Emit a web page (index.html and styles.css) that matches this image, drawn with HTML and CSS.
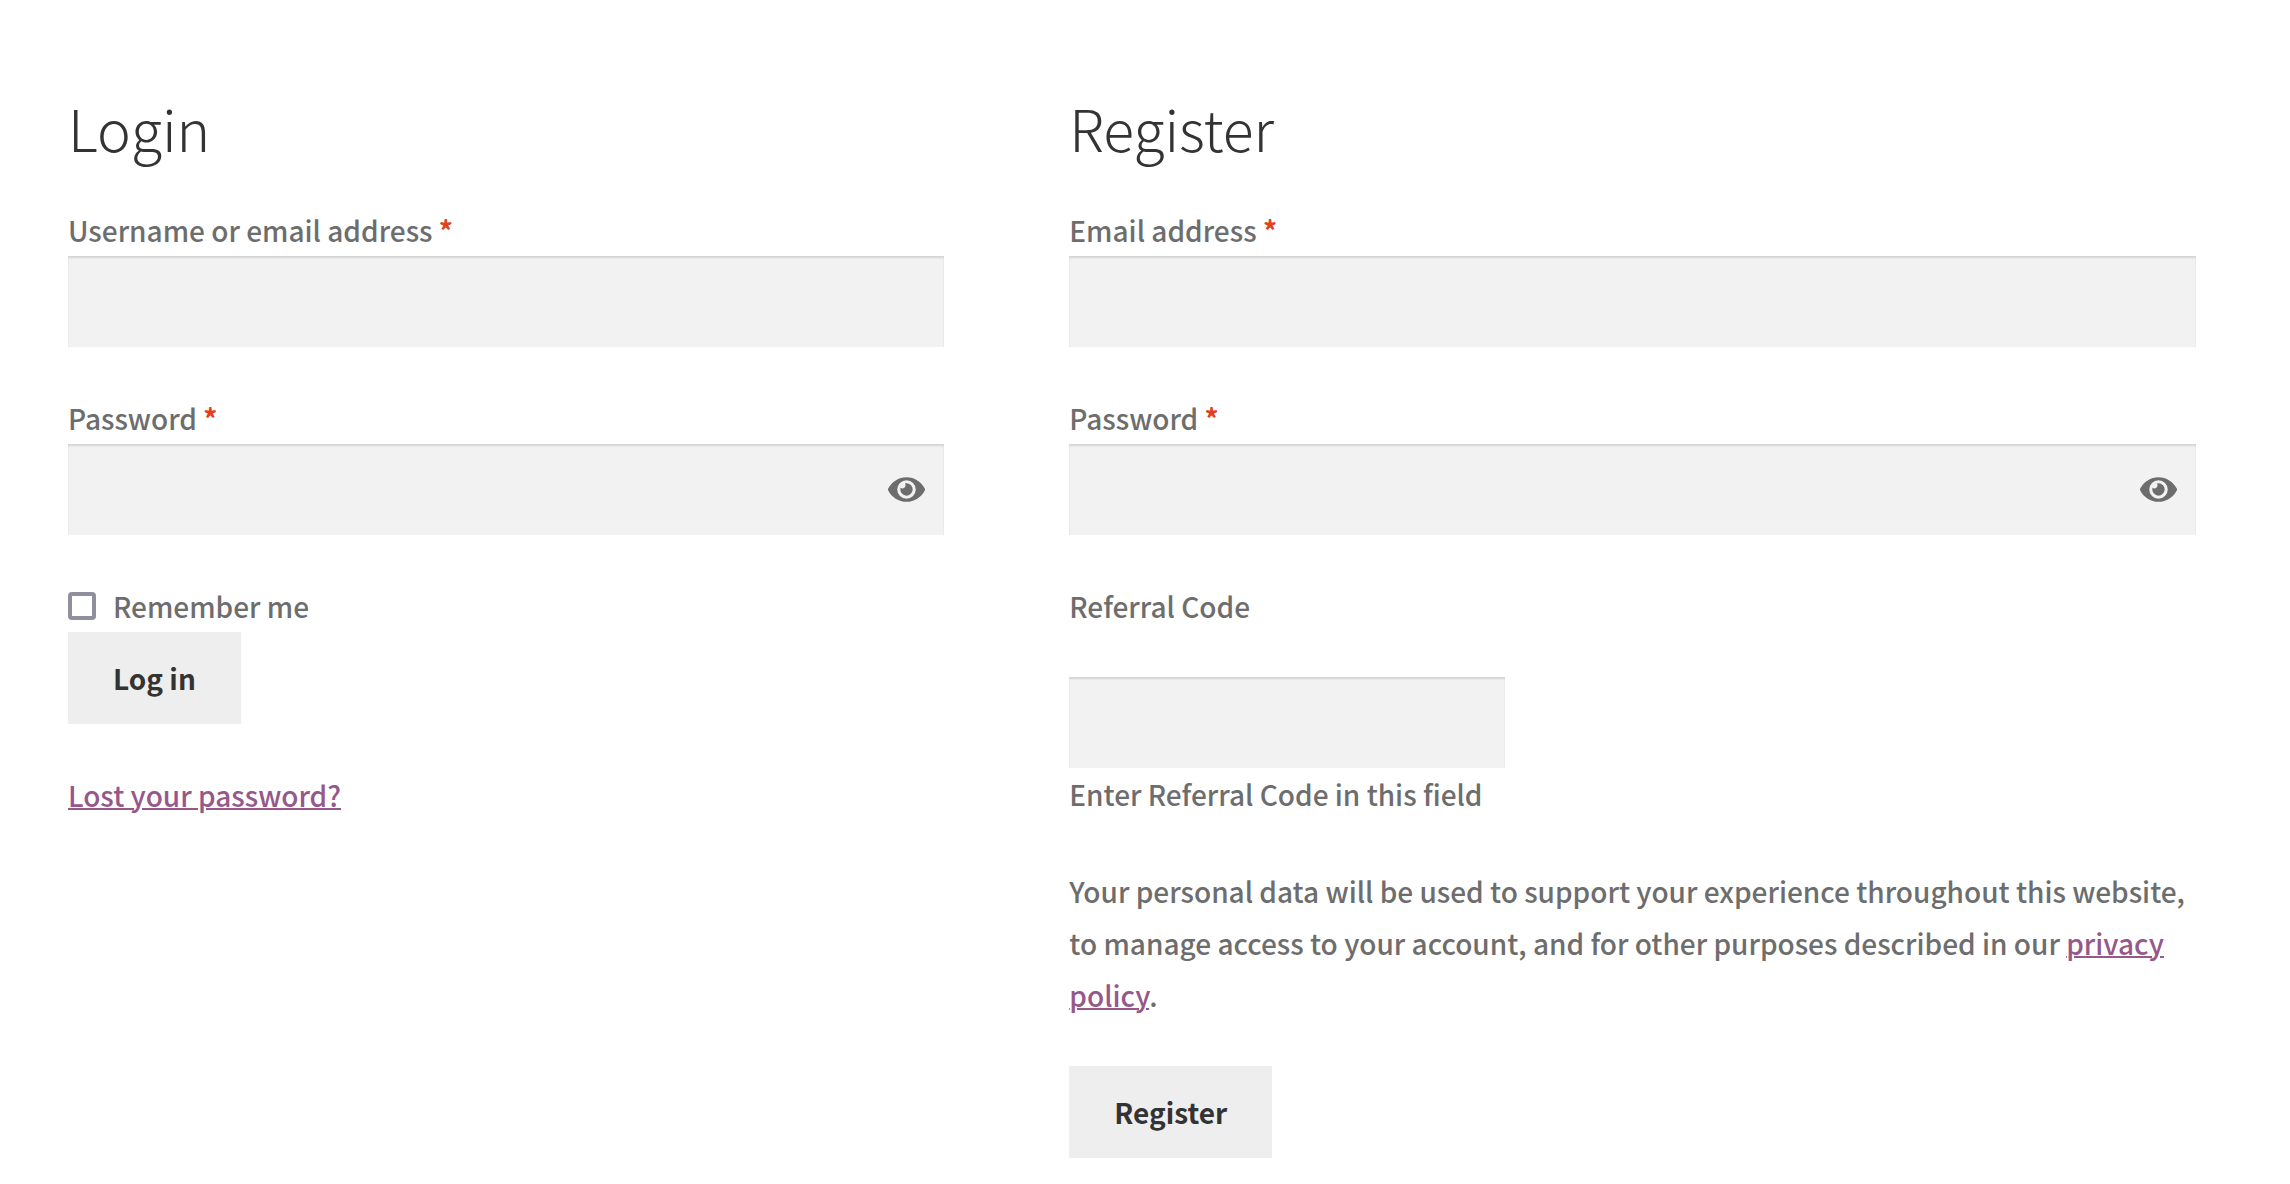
FILE: index.html
```html
<!DOCTYPE html>
<html lang="en">
<head>
<meta charset="utf-8">
<title>My account</title>
<meta name="viewport" content="width=device-width, initial-scale=1">
<link rel="stylesheet" href="styles.css">
</head>
<body>
<main class="account">
  <section class="column">
    <h2 class="heading">Login</h2>
    <form class="form">
      <div class="row">
        <label class="label" for="username">Username or email address <span class="required">*</span></label>
        <input class="field" id="username" type="text">
      </div>
      <div class="row">
        <label class="label" for="password">Password <span class="required">*</span></label>
        <div class="password">
          <input class="field" id="password" type="password">
          <button class="reveal" type="button" aria-label="Show password">
            <svg class="eye" viewBox="0 64 576 384"><path fill="currentColor" d="M572.52 241.4C518.29 135.59 410.93 64 288 64S57.68 135.64 3.48 241.41a32.35 32.35 0 0 0 0 29.19C57.71 376.41 165.07 448 288 448s230.32-71.64 284.52-177.41a32.35 32.35 0 0 0 0-29.19zM288 400a144 144 0 1 1 144-144 143.93 143.93 0 0 1-144 144zm0-240a95.31 95.31 0 0 0-25.31 3.79 47.85 47.85 0 0 1-66.9 66.9A95.78 95.78 0 1 0 288 160z"/></svg>
          </button>
        </div>
      </div>
      <div class="row">
        <label class="remember"><input class="checkbox" type="checkbox"><span>Remember me</span></label>
        <button class="button" type="submit">Log in</button>
      </div>
      <p class="text"><a class="link" href="#">Lost your password?</a></p>
    </form>
  </section>
  <section class="column">
    <h2 class="heading">Register</h2>
    <form class="form">
      <div class="row">
        <label class="label" for="reg-email">Email address <span class="required">*</span></label>
        <input class="field" id="reg-email" type="email">
      </div>
      <div class="row">
        <label class="label" for="reg-password">Password <span class="required">*</span></label>
        <div class="password">
          <input class="field" id="reg-password" type="password">
          <button class="reveal" type="button" aria-label="Show password">
            <svg class="eye" viewBox="0 64 576 384"><path fill="currentColor" d="M572.52 241.4C518.29 135.59 410.93 64 288 64S57.68 135.64 3.48 241.41a32.35 32.35 0 0 0 0 29.19C57.71 376.41 165.07 448 288 448s230.32-71.64 284.52-177.41a32.35 32.35 0 0 0 0-29.19zM288 400a144 144 0 1 1 144-144 143.93 143.93 0 0 1-144 144zm0-240a95.31 95.31 0 0 0-25.31 3.79 47.85 47.85 0 0 1-66.9 66.9A95.78 95.78 0 1 0 288 160z"/></svg>
          </button>
        </div>
      </div>
      <label class="label" for="referral">Referral Code</label>
      <div class="row">
        <input class="field field-short" id="referral" type="text" aria-describedby="referral-hint">
        <p class="text" id="referral-hint">Enter Referral Code in this field</p>
      </div>
      <p class="text">Your personal data will be used to support your experience throughout this website, to manage access to your account, and for other purposes described in our <a class="link" href="#">privacy policy</a>.</p>
      <button class="button" type="submit">Register</button>
    </form>
  </section>
</main>
</body>
</html>
```
FILE: styles.css
```css
* {
  box-sizing: border-box;
}

body {
  margin: 0;
  background: #fff;
  color: #6d6d6d;
  font: 500 28px/52px "Noto Sans CJK SC", sans-serif;
}

.account {
  display: grid;
  grid-template-columns: 7fr 9fr;
  column-gap: 125px;
  padding: 88px 94px 26px 68px;
}

.heading {
  margin: 0 0 38px;
  color: #333;
  font-size: 57px;
  font-weight: 300;
  line-height: 78px;
}

.form {
  display: flex;
  flex-direction: column;
  align-items: flex-start;
  gap: 45px;
}

.row {
  width: 100%;
}

.label {
  display: block;
}

.required {
  color: #e2401c;
  font-weight: 700;
}

.field {
  display: block;
  width: 100%;
  height: 91px;
  padding: 20px;
  border: 0;
  border-radius: 0;
  background: #f2f2f2;
  box-shadow: inset 0 2px 2px rgba(0, 0, 0, 0.125);
  color: #43454b;
  font: inherit;
}

.field-short {
  width: 436px;
  max-width: 100%;
}

.password {
  position: relative;
}

.password .field {
  padding-right: 76px;
}

.reveal {
  position: absolute;
  top: 0;
  right: 0;
  display: flex;
  align-items: center;
  height: 100%;
  padding: 0 19px;
  border: 0;
  background: none;
  color: #6d6d6d;
  cursor: pointer;
}

.eye {
  width: 37px;
  height: 25px;
}

.remember {
  display: flex;
  align-items: center;
  gap: 17px;
}

.checkbox {
  appearance: none;
  width: 28px;
  height: 28px;
  margin: 0;
  border: 4px solid #8f8f9d;
  border-radius: 4px;
  background: #fff;
}

.checkbox:checked {
  background: #8f8f9d;
}

.button {
  padding: 20px 45px;
  border: 0;
  background: #eee;
  color: #333;
  font: inherit;
  font-weight: 700;
  cursor: pointer;
}

.text {
  margin: 0;
}

.link {
  color: #96588a;
  text-decoration-thickness: 2px;
}
```
